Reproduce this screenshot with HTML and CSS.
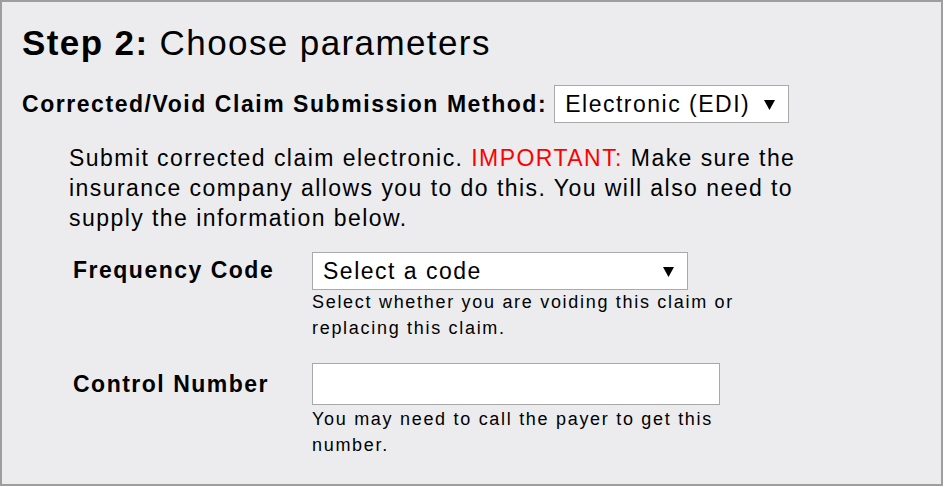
FILE: index.html
```html
<html>
	<head>
		<title>Corrected Claim</title>
		<link rel="stylesheet" href="styles.css">
	</head>
	<body>
		<div id="step">
			<h2><b>Step 2:</b> Choose parameters</h2>
			<div class="method">
				<label>Corrected/Void Claim Submission Method:</label>
				<div class="sel selMethod">
					<span>Electronic (EDI)</span>
					<svg class="arr" width="11" height="11" viewBox="0 0 11 11"><polygon points="0,1 11,1 5.5,11" fill="#000"/></svg>
				</div>
			</div>
			<p class="info">
				Submit corrected claim electronic. <span class="important">IMPORTANT:</span> Make sure the
				insurance company allows you to do this. You will also need to
				supply the information below.
			</p>
			<div class="row">
				<label>Frequency Code</label>
				<div class="field">
					<div class="sel selCode">
						<span>Select a code</span>
						<svg class="arr" width="11" height="11" viewBox="0 0 11 11"><polygon points="0,1 11,1 5.5,11" fill="#000"/></svg>
					</div>
					<div class="help">Select whether you are voiding this claim or<br>replacing this claim.</div>
				</div>
			</div>
			<div class="row rowCtl">
				<label>Control Number</label>
				<div class="field">
					<input class="txt" type="text">
					<div class="help">You may need to call the payer to get this<br>number.</div>
				</div>
			</div>
		</div>
	</body>
</html>
```
FILE: styles.css
```css
html, body {margin:0;padding:0;}
body {
	font-family:"Liberation Sans", Arial, sans-serif;
	color:#000;
	background:#fff;
}
#step {
	box-sizing:border-box;
	width:943px;
	height:486px;
	background:#ececee;
	border:2px solid #9e9e9e;
	padding:21px 0 0 20px;
}
h2 {
	margin:0;
	font-size:35px;
	font-weight:normal;
	line-height:40px;
	letter-spacing:1.4px;
}
.method {
	display:flex;
	align-items:center;
	margin-top:22px;
}
.method label {
	font-weight:bold;
	font-size:23px;
	letter-spacing:1.55px;
	margin-right:7px;
}
.sel {
	background:#fff;
	border:1px solid #a9a9a9;
	font-size:23px;
	letter-spacing:1.5px;
	display:flex;
	justify-content:space-between;
	align-items:center;
	box-sizing:border-box;
	padding:0 13px 0 10px;
}
.selMethod {
	width:235px;
	height:38px;
}
.selCode {
	width:376px;
	height:38px;
}
.info {
	margin:20px 0 0 47px;
	font-size:23px;
	line-height:30px;
	letter-spacing:1.45px;
	width:760px;
}
.important {
	color:#f00;
}
.row {
	display:flex;
	margin:19px 0 0 51px;
}
.rowCtl {
	margin-top:22px;
}
.row label {
	font-weight:bold;
	font-size:23px;
	line-height:30px;
	letter-spacing:1.5px;
	width:239px;
	padding-top:3px;
}
.rowCtl label {
	padding-top:6px;
}
.txt {
	display:block;
	width:408px;
	height:42px;
	box-sizing:border-box;
	border:1px solid #a9a9a9;
	background:#fff;
	margin:0;
}
.help {
	font-size:18px;
	line-height:26px;
	letter-spacing:1.7px;
	margin-top:-1px;
}
.rowCtl .help {
	margin-top:1px;
}
```
